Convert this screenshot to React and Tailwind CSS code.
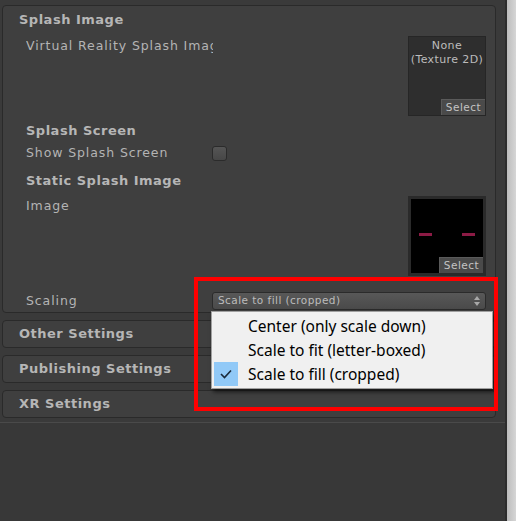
import React from 'react';

const label = 'text-[12.5px] tracking-[0.9px] text-[#b4b4b4]';
const heading = 'text-[13px] tracking-[0.5px] font-bold text-[#b6b6b6]';

const SelectButton = () => (
  <div className="self-end mt-auto w-[44px] h-[16px] bg-[#4a4a4a] border-t border-l border-[#5a5a5a] flex items-center justify-center text-[10.5px] tracking-[0.5px] text-[#c4c4c4] leading-none">
    Select
  </div>
);

const EmptyTexture = () => (
  <div className="w-[78px] h-[80px] border border-[#262626] bg-[#2e2e2e] flex flex-col">
    <div className="text-center text-[11px] tracking-[0.4px] leading-[14px] text-[#bcbcbc] pt-[2px] whitespace-nowrap">
      <div>None</div>
      <div>(Texture 2D)</div>
    </div>
    <SelectButton />
  </div>
);

const SplashTexture = () => (
  <div className="w-[78px] h-[80px] border-[3px] border-[#2a2a2a] bg-black flex flex-col">
    <div className="flex justify-between px-[8px] mt-[34px]">
      <div className="w-[13px] h-[3px] bg-[#8c1b45]" />
      <div className="w-[13px] h-[3px] bg-[#8c1b45]" />
    </div>
    <SelectButton />
  </div>
);

const Foldout = ({ title }) => (
  <div className="h-[28px] rounded-[4px] border border-[#2a2a2a] bg-[#3f3f3f] flex items-center pl-[16px]">
    <span className={heading}>{title}</span>
  </div>
);

const UpDown = () => (
  <svg width="6" height="10" viewBox="0 0 6 10">
    <path d="M3 0 L6 4 H0 Z" fill="#a8a8a8" />
    <path d="M3 10 L6 6 H0 Z" fill="#a8a8a8" />
  </svg>
);

const menuItems = ['Center (only scale down)', 'Scale to fit (letter-boxed)', 'Scale to fill (cropped)'];

export default function App() {
  return (
    <div className="relative w-[516px] h-[521px] bg-[#383838] flex overflow-hidden font-['DejaVu_Sans',sans-serif]">
      <div className="w-[507px] flex flex-col border-r-[2px] border-[#2d2d2d]">
        <div className="bg-[#3a3a3a] pt-[5px] pl-[2px] pr-[9px] pb-[4px] flex flex-col gap-[7px] border-b border-[#4a4a4a]">
          <div className="rounded-[4px] border border-[#2a2a2a] bg-[#3f3f3f] flex flex-col pb-[1px]">
            <div className="h-[28px] flex items-center pl-[16px]">
              <span className={heading}>Splash Image</span>
            </div>
            <div className="mt-[2px] h-[80px] flex pl-[23px] pr-[9px]">
              <div className={label + ' w-[187px] overflow-hidden whitespace-nowrap pt-[1px]'}>
                Virtual Reality Splash Image
              </div>
              <div className="flex-1" />
              <EmptyTexture />
            </div>
            <div className={heading + ' mt-[6px] h-[18px] leading-[18px] pl-[23px]'}>Splash Screen</div>
            <div className="mt-[4px] h-[18px] flex items-center pl-[23px]">
              <div className={label + ' w-[186px]'}>Show Splash Screen</div>
              <div className="w-[15px] h-[15px] rounded-[3px] border border-[#2b2b2b] bg-gradient-to-b from-[#555555] to-[#474747]" />
            </div>
            <div className={heading + ' mt-[10px] h-[18px] leading-[18px] pl-[23px]'}>Static Splash Image</div>
            <div className="mt-[6px] h-[80px] flex pl-[23px] pr-[9px]">
              <div className={label + ' pt-[1px]'}>Image</div>
              <div className="flex-1" />
              <SplashTexture />
            </div>
            <div className="mt-[15px] h-[20px] flex items-center pl-[23px] pr-[9px]">
              <div className={label + ' w-[186px]'}>Scaling</div>
              <div className="flex-1 h-[18px] rounded-[3px] border border-[#2b2b2b] bg-gradient-to-b from-[#585858] to-[#4a4a4a] flex items-center justify-between pl-[5px] pr-[5px]">
                <span className="text-[10.5px] tracking-[0.45px] text-[#bcbcbc]">Scale to fill (cropped)</span>
                <UpDown />
              </div>
            </div>
          </div>
          <Foldout title="Other Settings" />
          <Foldout title="Publishing Settings" />
          <Foldout title="XR Settings" />
        </div>
      </div>
      <div className="flex-1 bg-gradient-to-r from-[#bdbdbd] to-[#d6d6d6]" />

      <div className="absolute left-[211px] top-[311px] w-[282px] h-[78px] bg-[#f0f0f0] border border-[#a0a0a0] shadow-[2px_3px_4px_rgba(0,0,0,0.6)] pt-[2px] pl-[2px] font-['Noto_Sans',sans-serif]">
        {menuItems.map((item, i) => (
          <div key={item} className="h-[24px] flex items-center">
            <div className={'w-[24px] h-[24px] flex items-center justify-center ' + (i === 2 ? 'bg-[#91c9f7]' : '')}>
              {i === 2 && (
                <svg width="12" height="10" viewBox="0 0 12 10">
                  <path d="M1 5 L4.5 8.5 L11 1.5" stroke="#1a2a3a" strokeWidth="1.6" fill="none" />
                </svg>
              )}
            </div>
            <span className="ml-[10px] pt-[2px] text-[15.5px] text-black leading-none">{item}</span>
          </div>
        ))}
      </div>

      <div className="absolute left-[194px] top-[277px] w-[304px] h-[134px] border-[4px] border-[#ff0000]" />
    </div>
  );
}
